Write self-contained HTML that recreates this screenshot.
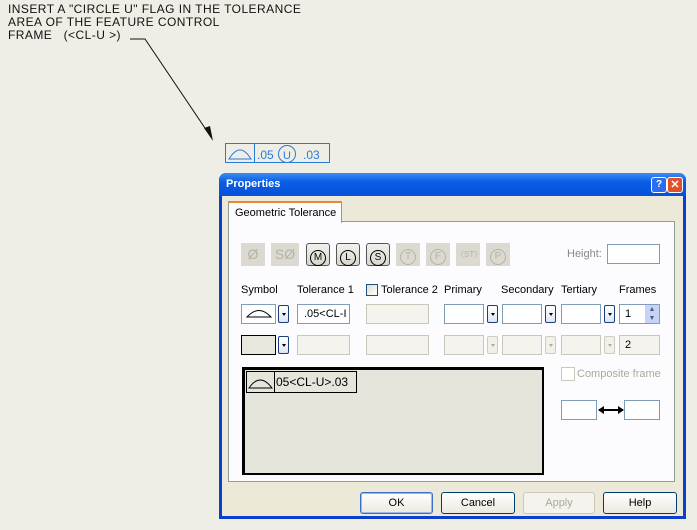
<!DOCTYPE html>
<html><head><style>
body{margin:0;width:697px;height:530px;background:#efeee6;position:relative;overflow:hidden;font-family:"Liberation Sans",sans-serif;font-size:11px;color:#000}
.a{position:absolute;white-space:nowrap}
.note{font-family:"Liberation Sans",sans-serif;font-size:12px;line-height:13px;color:#111;letter-spacing:0.45px}
.box{position:absolute;background:#fff;border:1px solid #7f9db9;box-sizing:border-box;height:20px;overflow:hidden;white-space:nowrap}
.dis{background:#f4f3ee;border-color:#c9c7ba}
.dd{position:absolute;width:11px;height:18px;border:1px solid #1c3f7a;border-radius:2px;background:linear-gradient(#fff,#dde5f5);box-sizing:border-box}
.dd:after{content:"";position:absolute;left:3px;top:7px;border:2px solid transparent;border-top:3px solid #000}
.ddd{border-color:#cfcbbd;background:#f2f0e8}
.ddd:after{border-top-color:#aaa}
.ib{position:absolute;top:243px;width:24px;height:23px;background:#dcdad0;box-sizing:border-box;text-align:center;line-height:23px;color:#b5b3a8;font-size:14px}
.ib.on{border:1px solid #555;border-radius:3px;background:linear-gradient(#f2f2ee,#d8d6cc);color:#000}
.c{display:inline-block;width:14px;height:14px;border:1px solid currentColor;border-radius:50%;line-height:14px;font-size:10px;margin-top:3px}
.btn{position:absolute;top:492px;height:22px;border:1px solid #003c74;border-radius:3px;background:linear-gradient(#fff,#ece9e0);box-sizing:border-box;text-align:center;line-height:20px}
</style></head><body>
<div class="a note" style="left:8px;top:3px">INSERT A "CIRCLE U" FLAG IN THE TOLERANCE<br>AREA OF THE FEATURE CONTROL<br>FRAME &nbsp;&nbsp;(&lt;CL-U &gt;)</div>
<svg class="a" style="left:0;top:0" width="697" height="170">
<path d="M130 39 H145 L211 137" stroke="#111" fill="none"/>
<path d="M213 141 L204 128 L210 126 Z" fill="#111"/>
<rect x="225.5" y="143.5" width="104" height="19" fill="none" stroke="#2a7bd6"/>
<line x1="254.5" y1="144" x2="254.5" y2="162" stroke="#2a7bd6"/>
<path d="M229 159 Q240 141 251 159 Z" fill="none" stroke="#2a7bd6"/>
<circle cx="287" cy="154" r="8.5" fill="none" stroke="#2a7bd6"/>
<text x="257" y="159" font-family="Liberation Sans" font-size="12" fill="#2a7bd6">.05</text>
<text x="283" y="159" font-family="Liberation Sans" font-size="11" fill="#2a7bd6">U</text>
<text x="303" y="159" font-family="Liberation Sans" font-size="12" fill="#2a7bd6">.03</text>
</svg>
<div class="a" style="left:219px;top:173px;width:467px;height:346px;background:#0a3fd0;border-radius:7px 7px 0 0"></div>
<div class="a" style="left:219px;top:173px;width:467px;height:23px;background:linear-gradient(#3b8cf5,#0a5ce6 40%,#0552d8);border-radius:7px 7px 0 0"></div>
<div class="a" style="left:226px;top:178px;color:#fff;font-weight:bold;font-size:11px">Properties</div>
<div class="a" style="left:651px;top:177px;width:14px;height:14px;background:#2c6cf0;border:1px solid #fff;border-radius:3px;color:#fff;font-weight:bold;font-size:10px;text-align:center;line-height:14px">?</div>
<div class="a" style="left:667px;top:177px;width:14px;height:14px;background:#e0502a;border:1px solid #fff;border-radius:3px;color:#fff;font-weight:bold;font-size:11px;text-align:center;line-height:14px">✕</div>
<div class="a" style="left:222px;top:196px;width:461px;height:320px;background:#ece9d8"></div>
<div class="a" style="left:228px;top:221px;width:447px;height:261px;background:#fcfcfe;border:1px solid #919b9c;box-sizing:border-box"></div>
<div class="a" style="left:228px;top:201px;width:114px;height:22px;background:#fcfcfe;border:1px solid #919b9c;border-bottom:none;border-top:2px solid #e68b2c;box-sizing:border-box;padding:4px 0 0 6px">Geometric Tolerance</div>
<div class="ib" style="left:241px">Ø</div>
<div class="ib" style="left:271px;width:28px">SØ</div>
<div class="ib on" style="left:306px"><span class="c">M</span></div>
<div class="ib on" style="left:336px"><span class="c">L</span></div>
<div class="ib on" style="left:366px"><span class="c">S</span></div>
<div class="ib" style="left:396px"><span class="c">T</span></div>
<div class="ib" style="left:426px"><span class="c">F</span></div>
<div class="ib" style="left:456px;font-size:8px">〈ST〉</div>
<div class="ib" style="left:486px"><span class="c">P</span></div>
<div class="a" style="left:567px;top:248px;color:#888">Height:</div>
<div class="box" style="left:607px;top:244px;width:53px"></div>
<div class="a" style="left:241px;top:284px">Symbol</div>
<div class="a" style="left:297px;top:284px">Tolerance 1</div>
<div class="a" style="left:366px;top:284px;width:12px;height:12px;border:1px solid #1c5180;box-sizing:border-box;background:linear-gradient(135deg,#dcdcd4,#fff)"></div>
<div class="a" style="left:381px;top:284px">Tolerance 2</div>
<div class="a" style="left:444px;top:284px">Primary</div>
<div class="a" style="left:501px;top:284px">Secondary</div>
<div class="a" style="left:561px;top:284px">Tertiary</div>
<div class="a" style="left:619px;top:284px">Frames</div>
<div class="box" style="left:241px;top:304px;width:35px"></div>
<svg class="a" style="left:246px;top:307px" width="26" height="12"><path d="M1 10 Q13 -3 25 10 Z" fill="none" stroke="#000"/></svg>
<div class="dd" style="left:278px;top:305px"></div>
<div class="box" style="left:297px;top:304px;width:53px;padding:3px 0 0 6px">.05&lt;CL-I</div>
<div class="box dis" style="left:366px;top:304px;width:63px"></div>
<div class="box" style="left:444px;top:304px;width:40px"></div><div class="dd" style="left:487px;top:305px"></div>
<div class="box" style="left:502px;top:304px;width:40px"></div><div class="dd" style="left:545px;top:305px"></div>
<div class="box" style="left:561px;top:304px;width:40px"></div><div class="dd" style="left:604px;top:305px"></div>
<div class="box" style="left:619px;top:304px;width:41px;padding:3px 0 0 5px">1</div>
<div class="a" style="left:645px;top:305px;width:14px;height:18px;background:#c6d3f7;color:#4d6185;font-size:7px;line-height:9px;text-align:center">▲<br>▼</div>
<div class="box" style="left:241px;top:335px;width:35px;background:#e8e7de;border:1px solid #000"></div>
<div class="dd" style="left:278px;top:336px"></div>
<div class="box dis" style="left:297px;top:335px;width:53px"></div>
<div class="box dis" style="left:366px;top:335px;width:63px"></div>
<div class="box dis" style="left:444px;top:335px;width:40px"></div><div class="dd ddd" style="left:487px;top:336px"></div>
<div class="box dis" style="left:502px;top:335px;width:40px"></div><div class="dd ddd" style="left:545px;top:336px"></div>
<div class="box dis" style="left:561px;top:335px;width:40px"></div><div class="dd ddd" style="left:604px;top:336px"></div>
<div class="box dis" style="left:619px;top:335px;width:41px;padding:3px 0 0 5px;color:#000">2</div>
<div class="a" style="left:242px;top:367px;width:302px;height:108px;background:#e6e5dc;border:2px solid #000;border-top-width:3px;border-left-width:3px;box-sizing:border-box"></div>
<div class="a" style="left:246px;top:371px;width:111px;height:22px;border:1px solid #000;box-sizing:border-box"></div>
<div class="a" style="left:274px;top:371px;width:1px;height:22px;background:#000"></div>
<svg class="a" style="left:248px;top:375px" width="25" height="15"><path d="M1 13 Q12 -3 24 13 Z" fill="none" stroke="#000"/></svg>
<div class="a" style="left:276px;top:375px;font-family:'Liberation Sans',sans-serif;font-size:12px">05&lt;CL-U&gt;.03</div>
<div class="a" style="left:561px;top:367px;width:12px;height:12px;border:1px solid #cac8bb;background:#fff"></div>
<div class="a" style="left:577px;top:368px;color:#aca899">Composite frame</div>
<div class="box" style="left:561px;top:400px;width:36px"></div>
<div class="box" style="left:624px;top:400px;width:36px"></div>
<svg class="a" style="left:598px;top:404px" width="26" height="12"><path d="M1 6 H25" stroke="#000" stroke-width="2"/><path d="M0 6 L6 2 L6 10Z M26 6 L20 2 L20 10Z" fill="#000"/></svg>
<div class="btn" style="left:360px;width:73px;border-color:#3c6fc8;box-shadow:inset 0 0 0 1px #9ab8ea">OK</div>
<div class="btn" style="left:441px;width:74px">Cancel</div>
<div class="btn" style="left:523px;width:72px;border-color:#cac8bb;background:#f4f3ee;color:#aca899">Apply</div>
<div class="btn" style="left:603px;width:74px">Help</div>
</body></html>
